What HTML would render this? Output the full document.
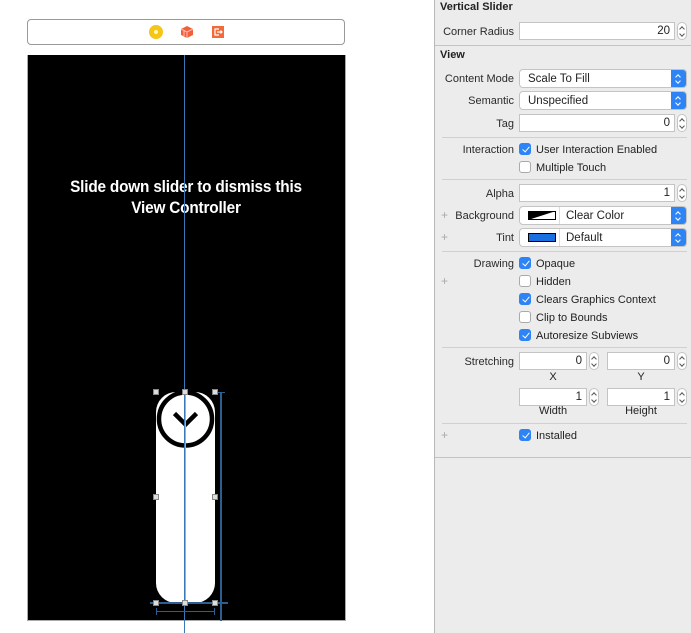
<!DOCTYPE html>
<html><head><meta charset="utf-8"><style>
*{box-sizing:border-box;margin:0;padding:0}
body{width:691px;height:633px;background:#fff;position:relative;overflow:hidden;font-family:"Liberation Sans",sans-serif;font-size:11px;color:#222}
.a{position:absolute}
.panel{left:434px;top:0;width:257px;height:633px;background:#ececec;border-left:1px solid #b8b8b8}
.lbl{position:absolute;right:177px;text-align:right;white-space:nowrap;color:#2a2a2a;padding-top:1px}
.hd{position:absolute;left:440px;font-weight:bold;color:#222}
.field{position:absolute;background:#fff;border:1px solid #c4c4c4;text-align:right;padding-right:4px;line-height:17px;font-size:11.5px}
.step{position:absolute;width:10px;height:18px;border:1px solid #c4c4c4;border-radius:5px;background:#fff}
.step:before,.step:after{content:"";position:absolute;left:2px;width:3px;height:3px;border-left:1px solid #555;border-top:1px solid #555}
.step:before{top:4px;transform:rotate(45deg)}
.step:after{top:9px;transform:rotate(225deg)}
.pop{position:absolute;left:519px;width:168px;height:19px;background:#fff;border:1px solid #c4c4c4;border-radius:4px;overflow:hidden;line-height:18px;font-size:11.5px}
.pop .bl{position:absolute;right:0;top:0;width:15px;height:19px;background:#2e83f5}
.pop .bl:before,.pop .bl:after{content:"";position:absolute;left:5px;width:3px;height:3px;border-left:1px solid #fff;border-top:1px solid #fff}
.pop .bl:before{top:5px;transform:rotate(45deg)}
.pop .bl:after{top:9px;transform:rotate(225deg)}
.cb{position:absolute;left:519px;width:12px;height:12px;border-radius:3px;background:#fff;border:1px solid #aaa}
.cb.on{background:#2e83f5;border-color:#2e83f5}
.cb.on:after{content:"";position:absolute;left:3.5px;top:1px;width:3px;height:6px;border-right:1.5px solid #fff;border-bottom:1.5px solid #fff;transform:rotate(40deg)}
.ct{position:absolute;left:536px;white-space:nowrap;padding-top:1px}
.sep{position:absolute;left:442px;width:245px;height:1px;background:#d0d0d0}
.plus{position:absolute;left:441px;color:#aaa;font-size:12px}
.h{position:absolute;width:6px;height:6px;background:#ddd;border:1px solid #888}
.small{position:absolute;text-align:center;width:40px;font-size:11px}
</style></head><body>
<div class="a" style="left:27px;top:19px;width:318px;height:26px;border:1px solid #999;border-radius:4px;background:#fff"></div>
<div class="a" style="left:149px;top:25px;width:14px;height:14px;border-radius:50%;background:#f5c518"></div>
<div class="a" style="left:154px;top:30px;width:4px;height:4px;border-radius:50%;background:#fff6c0"></div>
<svg class="a" style="left:180px;top:25px" width="14" height="14" viewBox="0 0 14 14"><path d="M7 1 L13 4 L13 10 L7 13 L1 10 L1 4Z" fill="#f0603a"/><path d="M1 4 L7 7 L13 4 M7 7 L7 13 M4 5.5 L4 11" stroke="#fbb" stroke-width="1" fill="none"/></svg>
<svg class="a" style="left:211px;top:25px" width="14" height="14" viewBox="0 0 14 14"><rect x="1" y="1" width="12" height="12" fill="#f26a3a"/><path d="M8 4 H4 V10 H8 M6 7 H11 M9.5 5.5 L11 7 L9.5 8.5" stroke="#fff" stroke-width="1.2" fill="none"/></svg>

<div class="a" style="left:27px;top:55px;width:319px;height:566px;background:#000;border:1px solid #aaa;border-top:none"></div>
<div class="a" style="left:-3px;top:177px;width:378px;text-align:center;color:#fff;font-weight:bold;font-size:16.5px;line-height:21px;letter-spacing:-0.2px;transform:scaleX(0.93)">Slide down slider to dismiss this<br>View Controller</div>

<div class="a" style="left:156px;top:392px;width:59px;height:211px;background:#fff;border-radius:20px"></div>
<svg class="a" style="left:155px;top:389px" width="62" height="62" viewBox="0 0 62 62"><circle cx="30.5" cy="30" r="26.5" fill="#fff" stroke="#000" stroke-width="4.5"/><path d="M19.5 24.5 L30.5 35.5 L41.5 24.5" stroke="#000" stroke-width="4.5" fill="none"/></svg>
<div class="a" style="left:184px;top:55px;width:1px;height:578px;background:#3a78b8"></div>
<div class="a" style="left:185px;top:392px;width:1px;height:211px;background:#8ab4e0"></div>
<div class="a" style="left:220px;top:392px;width:2px;height:229px;background:#2c5f90"></div>
<div class="a" style="left:216px;top:392px;width:9px;height:1px;background:#2c5f90"></div>
<div class="a" style="left:150px;top:602px;width:78px;height:2px;background:#2c5f90"></div>
<div class="a" style="left:156px;top:611px;width:59px;height:1px;background:#2c5f90"></div>
<div class="a" style="left:156px;top:608px;width:1px;height:7px;background:#2c5f90"></div>
<div class="a" style="left:214px;top:608px;width:1px;height:7px;background:#2c5f90"></div>
<div class="h" style="left:153px;top:389px"></div><div class="h" style="left:182px;top:389px"></div><div class="h" style="left:212px;top:389px"></div>
<div class="h" style="left:153px;top:494px"></div><div class="h" style="left:212px;top:494px"></div>
<div class="h" style="left:153px;top:600px"></div><div class="h" style="left:182px;top:600px"></div><div class="h" style="left:212px;top:600px"></div>

<div class="a panel"></div>
<div class="hd" style="top:1px">Vertical Slider</div>
<div class="lbl" style="top:25px">Corner Radius</div>
<div class="field" style="left:519px;top:22px;width:156px;height:18px">20</div><div class="step" style="left:677px;top:22px"></div>
<div class="a" style="left:435px;top:45px;width:256px;height:1px;background:#c4c4c4"></div>
<div class="hd" style="top:49px">View</div>
<div class="lbl" style="top:72px">Content Mode</div>
<div class="pop" style="top:69px"><span style="padding-left:8px">Scale To Fill</span><div class="bl"></div></div>
<div class="lbl" style="top:94px">Semantic</div>
<div class="pop" style="top:91px"><span style="padding-left:8px">Unspecified</span><div class="bl"></div></div>
<div class="lbl" style="top:117px">Tag</div>
<div class="field" style="left:519px;top:114px;width:156px;height:18px">0</div><div class="step" style="left:677px;top:114px"></div>
<div class="sep" style="top:137px"></div>
<div class="lbl" style="top:143px">Interaction</div>
<div class="cb on" style="top:143px"></div><div class="ct" style="top:143px">User Interaction Enabled</div>
<div class="cb" style="top:161px"></div><div class="ct" style="top:161px">Multiple Touch</div>
<div class="sep" style="top:179px"></div>
<div class="lbl" style="top:187px">Alpha</div>
<div class="field" style="left:519px;top:184px;width:156px;height:18px">1</div><div class="step" style="left:677px;top:184px"></div>
<div class="plus" style="top:208px">+</div>
<div class="lbl" style="top:209px">Background</div>
<div class="pop" style="top:206px"><div class="a" style="left:39px;top:0;width:1px;height:19px;background:#ddd"></div><svg class="a" style="left:8px;top:4px" width="28" height="9"><rect x="0.5" y="0.5" width="27" height="8" fill="#fff" stroke="#000"/><path d="M0 0 H28 L0 9Z" fill="#000"/></svg><span style="position:absolute;left:46px">Clear Color</span><div class="bl"></div></div>
<div class="plus" style="top:230px">+</div>
<div class="lbl" style="top:231px">Tint</div>
<div class="pop" style="top:228px"><div class="a" style="left:39px;top:0;width:1px;height:19px;background:#ddd"></div><div class="a" style="left:8px;top:4px;width:28px;height:9px;background:#1a6fe0;border:1px solid #000"></div><span style="position:absolute;left:46px">Default</span><div class="bl"></div></div>
<div class="sep" style="top:251px"></div>
<div class="lbl" style="top:257px">Drawing</div>
<div class="cb on" style="top:257px"></div><div class="ct" style="top:257px">Opaque</div>
<div class="plus" style="top:274px">+</div>
<div class="cb" style="top:275px"></div><div class="ct" style="top:275px">Hidden</div>
<div class="cb on" style="top:293px"></div><div class="ct" style="top:293px">Clears Graphics Context</div>
<div class="cb" style="top:311px"></div><div class="ct" style="top:311px">Clip to Bounds</div>
<div class="cb on" style="top:329px"></div><div class="ct" style="top:329px">Autoresize Subviews</div>
<div class="sep" style="top:347px"></div>
<div class="lbl" style="top:355px">Stretching</div>
<div class="field" style="left:519px;top:352px;width:68px;height:18px">0</div><div class="step" style="left:589px;top:352px"></div>
<div class="field" style="left:607px;top:352px;width:68px;height:18px">0</div><div class="step" style="left:677px;top:352px"></div>
<div class="small" style="left:533px;top:371px">X</div><div class="small" style="left:621px;top:371px">Y</div>
<div class="field" style="left:519px;top:388px;width:68px;height:18px">1</div><div class="step" style="left:589px;top:388px"></div>
<div class="field" style="left:607px;top:388px;width:68px;height:18px">1</div><div class="step" style="left:677px;top:388px"></div>
<div class="small" style="left:533px;top:405px">Width</div><div class="small" style="left:621px;top:405px">Height</div>
<div class="sep" style="top:423px"></div>
<div class="plus" style="top:428px">+</div>
<div class="cb on" style="top:429px"></div><div class="ct" style="top:429px">Installed</div>
<div class="a" style="left:435px;top:457px;width:256px;height:1px;background:#c4c4c4"></div>
</body></html>
